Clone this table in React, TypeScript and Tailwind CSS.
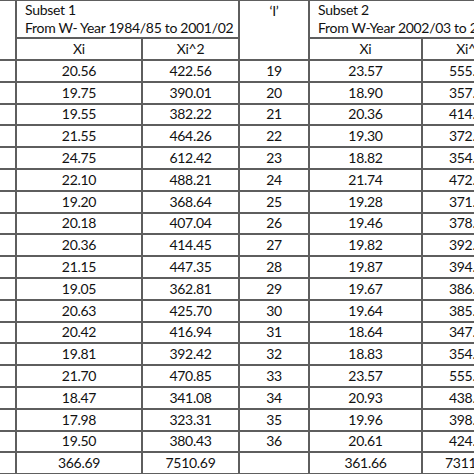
import React from "react";

type Row = {
  x1: string;
  x1sq: string;
  i: string;
  x2: string;
  x2sq: string;
};

const rows: Row[] = [
  { x1: "20.56", x1sq: "422.56", i: "19", x2: "23.57", x2sq: "555.54" },
  { x1: "19.75", x1sq: "390.01", i: "20", x2: "18.90", x2sq: "357.21" },
  { x1: "19.55", x1sq: "382.22", i: "21", x2: "20.36", x2sq: "414.53" },
  { x1: "21.55", x1sq: "464.26", i: "22", x2: "19.30", x2sq: "372.49" },
  { x1: "24.75", x1sq: "612.42", i: "23", x2: "18.82", x2sq: "354.19" },
  { x1: "22.10", x1sq: "488.21", i: "24", x2: "21.74", x2sq: "472.63" },
  { x1: "19.20", x1sq: "368.64", i: "25", x2: "19.28", x2sq: "371.72" },
  { x1: "20.18", x1sq: "407.04", i: "26", x2: "19.46", x2sq: "378.69" },
  { x1: "20.36", x1sq: "414.45", i: "27", x2: "19.82", x2sq: "392.83" },
  { x1: "21.15", x1sq: "447.35", i: "28", x2: "19.87", x2sq: "394.82" },
  { x1: "19.05", x1sq: "362.81", i: "29", x2: "19.67", x2sq: "386.91" },
  { x1: "20.63", x1sq: "425.70", i: "30", x2: "19.64", x2sq: "385.73" },
  { x1: "20.42", x1sq: "416.94", i: "31", x2: "18.64", x2sq: "347.45" },
  { x1: "19.81", x1sq: "392.42", i: "32", x2: "18.83", x2sq: "354.57" },
  { x1: "21.70", x1sq: "470.85", i: "33", x2: "23.57", x2sq: "555.54" },
  { x1: "18.47", x1sq: "341.08", i: "34", x2: "20.93", x2sq: "438.06" },
  { x1: "17.98", x1sq: "323.31", i: "35", x2: "19.96", x2sq: "398.40" },
  { x1: "19.50", x1sq: "380.43", i: "36", x2: "20.61", x2sq: "424.77" },
];

const cell = "border-2 border-[#5e5e5e] p-0 text-center align-middle";

export default function App() {
  return (
    <div className="w-[474px] h-[474px] overflow-hidden bg-white">
      <table
        className="table-fixed border-collapse w-[519px] -mt-[1px] -ml-[1px] text-[14px] tracking-[-0.3px] leading-none text-[#111]"
        style={{ fontFamily: "Lato, 'Noto Sans', sans-serif" }}
      >
        <colgroup>
          <col className="w-[17px]" />
          <col className="w-[126px]" />
          <col className="w-[97px]" />
          <col className="w-[70px]" />
          <col className="w-[113px]" />
          <col className="w-[96px]" />
        </colgroup>
        <tbody>
          <tr className="h-[19px]">
            <td rowSpan={3} className={cell + " border-l-0"}></td>
            <td colSpan={2} className={cell + " border-b-0 text-left pl-2"}>
              Subset 1
            </td>
            <td rowSpan={3} className={cell + " align-top pt-[3px]"}>
              ‘I’
            </td>
            <td colSpan={2} className={cell + " border-b-0 text-left pl-2"}>
              Subset 2
            </td>
          </tr>
          <tr className="h-[19px]">
            <td colSpan={2} className={cell + " border-t-0 text-left pl-2 whitespace-nowrap"}>
              From W- Year 1984/85 to 2001/02
            </td>
            <td colSpan={2} className={cell + " border-t-0 text-left pl-2 whitespace-nowrap"}>
              From W-Year 2002/03 to 2019/20
            </td>
          </tr>
          <tr className="h-[22px]">
            <td className={cell}>Xi</td>
            <td className={cell}>Xi^2</td>
            <td className={cell}>Xi</td>
            <td className={cell}>Xi^2</td>
          </tr>
          {rows.map((r, idx) => (
            <tr key={idx} className="h-[21.8px]">
              <td className={cell + " border-l-0"}></td>
              <td className={cell}>{r.x1}</td>
              <td className={cell}>{r.x1sq}</td>
              <td className={cell}>{r.i}</td>
              <td className={cell}>{r.x2}</td>
              <td className={cell}>{r.x2sq}</td>
            </tr>
          ))}
          <tr className="h-[22px]">
            <td className={cell + " border-l-0"}></td>
            <td className={cell}>366.69</td>
            <td className={cell}>7510.69</td>
            <td className={cell}></td>
            <td className={cell}>361.66</td>
            <td className={cell}>7311.28</td>
          </tr>
        </tbody>
      </table>
    </div>
  );
}
